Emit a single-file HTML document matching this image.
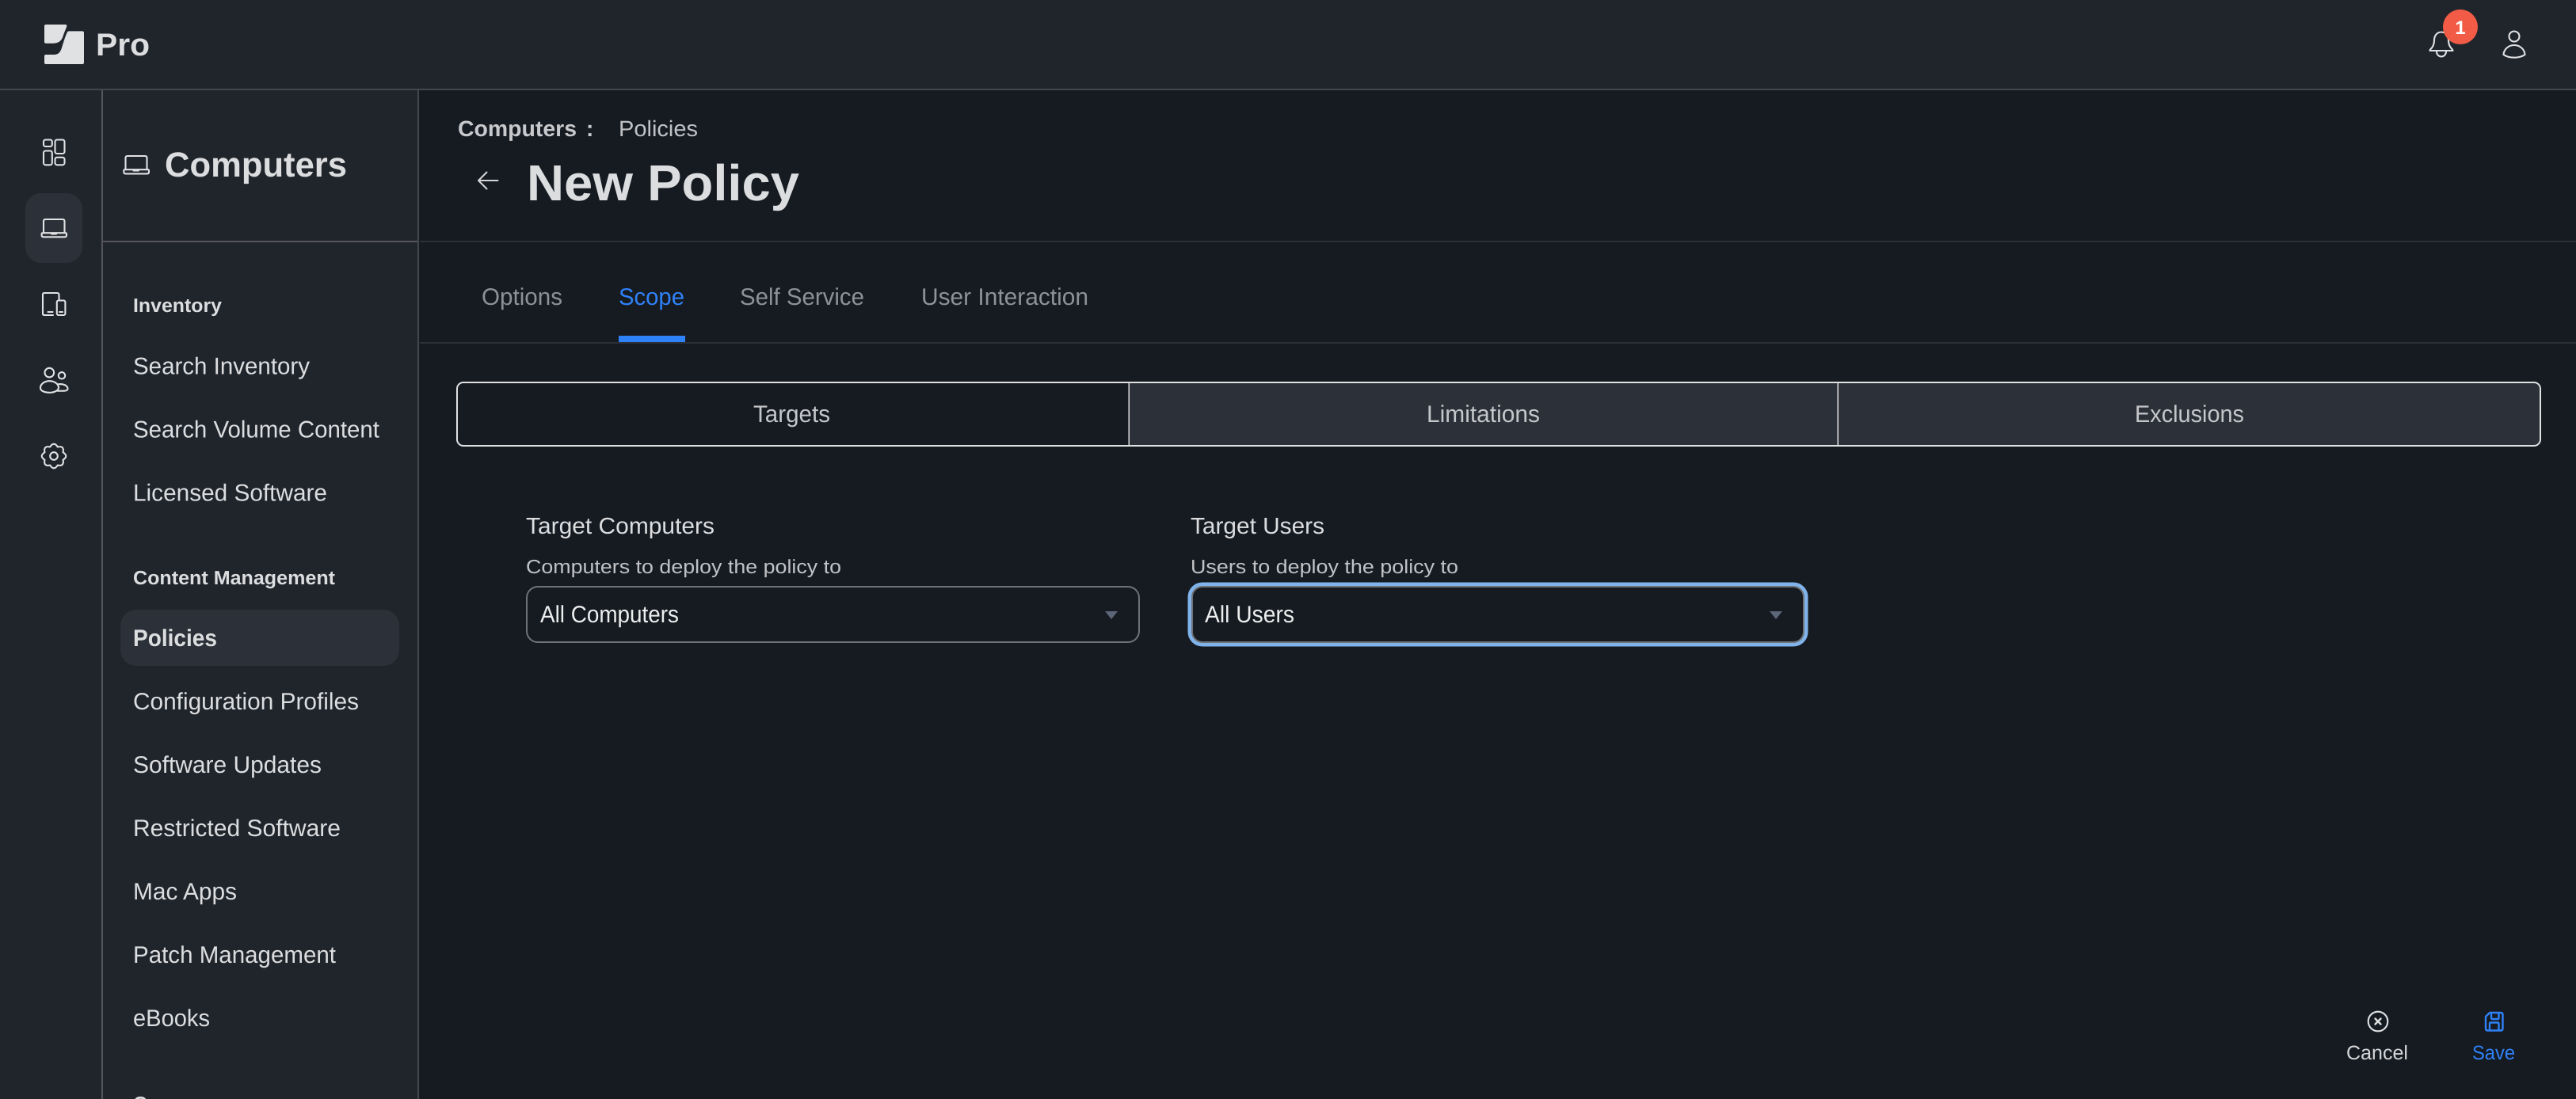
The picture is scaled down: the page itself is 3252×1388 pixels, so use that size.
<!DOCTYPE html>
<html lang="en"><head><meta charset="utf-8"><title>New Policy</title>
<style>
html,body{margin:0;padding:0;background:#161b22;width:3252px;height:1388px;overflow:hidden}
svg{display:block}
text{font-family:"Liberation Sans",sans-serif;fill:#dcddDF;text-rendering:geometricPrecision}
.b{font-weight:700}
.n{font-size:30px}
.ic{fill:none;stroke:#e0e1e3;stroke-width:2.1;stroke-linecap:round;stroke-linejoin:round}
</style></head><body>
<svg xmlns="http://www.w3.org/2000/svg" width="3252" height="1388" viewBox="0 0 3252 1388">
<rect width="3252" height="1388" fill="#161b22"/>
<!-- top bar + side panels -->
<rect width="3252" height="112" fill="#20252c"/>
<rect x="0" y="112" width="128" height="1276" fill="#20252c"/>
<rect x="130" y="114" width="397" height="1274" fill="#20252c"/>
<rect x="0" y="112" width="3252" height="2" fill="#43464c"/>
<rect x="128" y="114" width="2" height="1274" fill="#54565b"/>
<rect x="527" y="114" width="2" height="1274" fill="#43464c"/>
<rect x="130" y="304" width="397" height="2" fill="#54565b"/>
<rect x="530" y="304" width="2722" height="2" fill="#2c3038"/>
<rect x="530" y="432" width="2722" height="2" fill="#2c3038"/>

<!-- logo -->
<path fill="#e0e1e3" d="M58 31H82.500Q84.800 31 84.200 33.500C83 37 81.500 40 80.500 43C79 47 78.500 50 75 52.500C72.500 54.300 69 54.800 65 54.800H58Q56 54.800 56 52.800V33Q56 31 58 31Z"/>
<path fill="#e0e1e3" d="M87 39.400H104Q106 39.400 106 41.400V79Q106 81 104 81H58Q56 81 56 79V71Q56 69 58 69H68C72 69 75 67.500 77 63C79 58 81 49 84.500 41.500Q85.500 39.400 87 39.400Z"/>
<text x="121" y="70" class="b" font-size="40" textLength="68" lengthAdjust="spacingAndGlyphs">Pro</text>

<!-- rail -->
<rect x="32" y="244" width="72" height="88" rx="20" fill="#2c3038"/>
<g class="ic">
<rect x="55" y="176.500" width="10.800" height="8.500" rx="2.500"/>
<rect x="55" y="190.500" width="10.800" height="17.800" rx="2.500"/>
<rect x="69.500" y="176.500" width="12" height="17.500" rx="2.500"/>
<rect x="69.500" y="198.800" width="12" height="9.500" rx="2.500"/>
<path d="M55 294V279.500Q55 277 57.500 277H79Q81.500 277 81.500 279.500V294"/>
<path d="M54 294.200H82.500Q84 294.200 84 295.500V297Q84 299.300 81.500 299.300H55Q52.600 299.300 52.600 297V295.500Q52.600 294.200 54 294.200Z"/>
<path d="M65 295.500H71"/>
<path d="M67 398H56Q54 398 54 396V372Q54 370 56 370H72Q74.500 370 74.500 372.500V379"/>
<rect x="71.800" y="379.500" width="10.600" height="18.500" rx="2"/>
<path d="M60.500 394H66.500M75 394H79"/>
<circle cx="62.300" cy="470.600" r="5.800"/>
<circle cx="78" cy="474.300" r="4.200"/>
<path d="M51 490C51 484.500 57 481.200 62.500 481.200C68 481.200 74 484.500 74 489.500C74 493.500 68 495.800 62.500 495.800C57 495.800 51 494 51 490Z"/>
<path d="M73.800 485.200C79 484.500 85.500 486.500 85.500 491C85.500 492.500 84 493.500 81 493.700H72.500"/>
<g transform="translate(68,576)">
<path d="M-4.780-11.550Q0-19 4.780-11.550Q13.400-13.400 11.550-4.780Q19 0 11.550 4.780Q13.400 13.400 4.780 11.550Q0 19-4.780 11.550Q-13.400 13.400-11.550 4.780Q-19 0-11.550-4.780Q-13.400-13.400-4.780-11.550Z"/>
<circle r="4.800"/>
</g>
<!-- heading laptop -->
<path d="M158.500 214V199.500Q158.500 197 161 197H183Q185.500 197 185.500 199.500V214"/>
<path d="M158 214.200H186.500Q188 214.200 188 215.500V217Q188 219.400 186 219.400H158.500Q156.300 219.400 156.300 217V215.500Q156.300 214.200 158 214.200Z"/>
<path d="M168.500 215.500H175"/>
</g>
<text x="208" y="223" class="b" font-size="44" textLength="230" lengthAdjust="spacingAndGlyphs">Computers</text>

<!-- sidebar -->
<rect x="152" y="770" width="352" height="71" rx="20" fill="#2c3038"/>
<text x="168" y="394" class="b" font-size="24.500" textLength="112" lengthAdjust="spacingAndGlyphs">Inventory</text>
<text x="168" y="472.500" class="n" textLength="223" lengthAdjust="spacingAndGlyphs">Search Inventory</text>
<text x="168" y="552.500" class="n" textLength="311" lengthAdjust="spacingAndGlyphs">Search Volume Content</text>
<text x="168" y="632.500" class="n" textLength="245" lengthAdjust="spacingAndGlyphs">Licensed Software</text>
<text x="168" y="738" class="b" font-size="24.500" textLength="255" lengthAdjust="spacingAndGlyphs">Content Management</text>
<text x="168" y="816" class="b" font-size="30" textLength="106" lengthAdjust="spacingAndGlyphs">Policies</text>
<text x="168" y="896" class="n" textLength="285" lengthAdjust="spacingAndGlyphs">Configuration Profiles</text>
<text x="168" y="976" class="n" textLength="238" lengthAdjust="spacingAndGlyphs">Software Updates</text>
<text x="168" y="1056" class="n" textLength="262" lengthAdjust="spacingAndGlyphs">Restricted Software</text>
<text x="168" y="1136" class="n" textLength="131" lengthAdjust="spacingAndGlyphs">Mac Apps</text>
<text x="168" y="1216" class="n" textLength="256" lengthAdjust="spacingAndGlyphs">Patch Management</text>
<text x="168" y="1296" class="n" textLength="97" lengthAdjust="spacingAndGlyphs">eBooks</text>
<text x="168" y="1402" class="b" font-size="24.500" textLength="85" lengthAdjust="spacingAndGlyphs">Groups</text>

<!-- header -->
<text x="578" y="172" class="b" font-size="28" style="fill:#c8c9cc" textLength="150" lengthAdjust="spacingAndGlyphs">Computers</text>
<text x="740" y="172" class="b" font-size="28" style="fill:#c8c9cc">:</text>
<text x="781" y="172" font-size="28" style="fill:#c0c2c5" textLength="100" lengthAdjust="spacingAndGlyphs">Policies</text>
<path d="M628.500 228H604.500M614.500 217.500L604 228L614.500 238.500" fill="none" stroke="#d5d6d8" stroke-width="2" stroke-linecap="round" stroke-linejoin="round"/>
<text x="665" y="253" class="b" font-size="64" textLength="344" lengthAdjust="spacingAndGlyphs">New Policy</text>

<!-- tabs -->
<text x="608" y="385" class="n" style="fill:#8e9196" textLength="102" lengthAdjust="spacingAndGlyphs">Options</text>
<text x="781" y="385" class="n" style="fill:#2f81f7" textLength="83" lengthAdjust="spacingAndGlyphs">Scope</text>
<text x="934" y="385" class="n" style="fill:#8e9196" textLength="157" lengthAdjust="spacingAndGlyphs">Self Service</text>
<text x="1163" y="385" class="n" style="fill:#8e9196" textLength="211" lengthAdjust="spacingAndGlyphs">User Interaction</text>
<rect x="781" y="424" width="84" height="8" fill="#2f81f7"/>

<!-- segmented -->
<path d="M1425 483H3198Q3207 483 3207 491V555Q3207 563 3198 563H1425Z" fill="#2c3038"/>
<rect x="577" y="483" width="2630" height="80" rx="8" fill="none" stroke="#e0e1e3" stroke-width="2"/>
<rect x="1424.500" y="483" width="1.500" height="80" fill="#e0e1e3"/>
<rect x="2319.500" y="483" width="1.500" height="80" fill="#e0e1e3"/>
<text x="951" y="533" class="n" style="fill:#c4c6c9" textLength="97" lengthAdjust="spacingAndGlyphs">Targets</text>
<text x="1801" y="533" class="n" style="fill:#c4c6c9" textLength="143" lengthAdjust="spacingAndGlyphs">Limitations</text>
<text x="2695" y="533" class="n" style="fill:#c4c6c9" textLength="138" lengthAdjust="spacingAndGlyphs">Exclusions</text>

<!-- fields -->
<text x="664" y="674" font-size="29" textLength="238" lengthAdjust="spacingAndGlyphs">Target Computers</text>
<text x="664" y="724" font-size="24.500" style="fill:#c0c2c5" textLength="398" lengthAdjust="spacingAndGlyphs">Computers to deploy the policy to</text>
<rect x="665" y="741" width="773" height="70" rx="14" fill="none" stroke="#6f7276" stroke-width="2"/>
<text x="682" y="786" font-size="30" style="fill:#eceded" textLength="175" lengthAdjust="spacingAndGlyphs">All Computers</text>
<path d="M1395 772H1411L1403 782Z" fill="#5d6678"/>

<text x="1503" y="674" font-size="29" textLength="169" lengthAdjust="spacingAndGlyphs">Target Users</text>
<text x="1503" y="724" font-size="24.500" style="fill:#c0c2c5" textLength="338" lengthAdjust="spacingAndGlyphs">Users to deploy the policy to</text>
<rect x="1502" y="738" width="778" height="76" rx="16" fill="none" stroke="#7fb3ea" stroke-width="5"/>
<rect x="1505" y="741" width="772" height="70" rx="13" fill="none" stroke="#6f7276" stroke-width="2"/>
<text x="1521" y="786" font-size="30" style="fill:#eceded" textLength="113" lengthAdjust="spacingAndGlyphs">All Users</text>
<path d="M2234 772H2250L2242 782Z" fill="#5d6678"/>

<!-- top right -->
<g class="ic">
<path d="M3068 62.500C3072 59 3073 55 3073 51C3073 44.500 3077 40.500 3082 40.500C3087 40.500 3091 44.500 3091 51C3091 55 3092 59 3096 62.500L3096.500 64H3067.500Z"/>
<path d="M3076 65C3076 69 3079 71.500 3082 71.500C3085 71.500 3088 69 3088 65"/>
<circle cx="3174" cy="46" r="6.500"/>
<path d="M3160.500 69C3161 62 3167 57 3174 57C3181 57 3187 62 3187.500 69C3184 71.500 3179 72.700 3174 72.700C3169 72.700 3164 71.500 3160.500 69Z"/>
<circle cx="3002" cy="1290" r="12.300"/>
<path d="M2998.500 1286.500L3005.500 1293.500M3005.500 1286.500L2998.500 1293.500" stroke-width="2.400"/>
</g>
<circle cx="3106" cy="34" r="22" fill="#f25c47"/>
<text x="3106" y="43" class="b" font-size="24" text-anchor="middle" style="fill:#ffffff">1</text>

<!-- footer actions -->
<text x="2962" y="1338" font-size="25" style="fill:#d5d6d8" textLength="78" lengthAdjust="spacingAndGlyphs">Cancel</text>
<g fill="none" stroke="#2f81f7" stroke-width="2.400" stroke-linecap="round" stroke-linejoin="round">
<path d="M3143 1279H3157Q3159.500 1279 3159.500 1281.500V1299Q3159.500 1301.500 3157 1301.500H3140.500Q3138 1301.500 3138 1299V1284Z"/>
<path d="M3145 1279.500V1285.500Q3145 1287 3146.500 1287H3153Q3154.500 1287 3154.500 1285.500V1279.500"/>
<path d="M3143 1301V1293Q3143 1291.500 3144.500 1291.500H3153Q3154.500 1291.500 3154.500 1293V1301"/>
</g>
<text x="3121" y="1338" font-size="25" style="fill:#2f81f7" textLength="54" lengthAdjust="spacingAndGlyphs">Save</text>
</svg>
</body></html>
